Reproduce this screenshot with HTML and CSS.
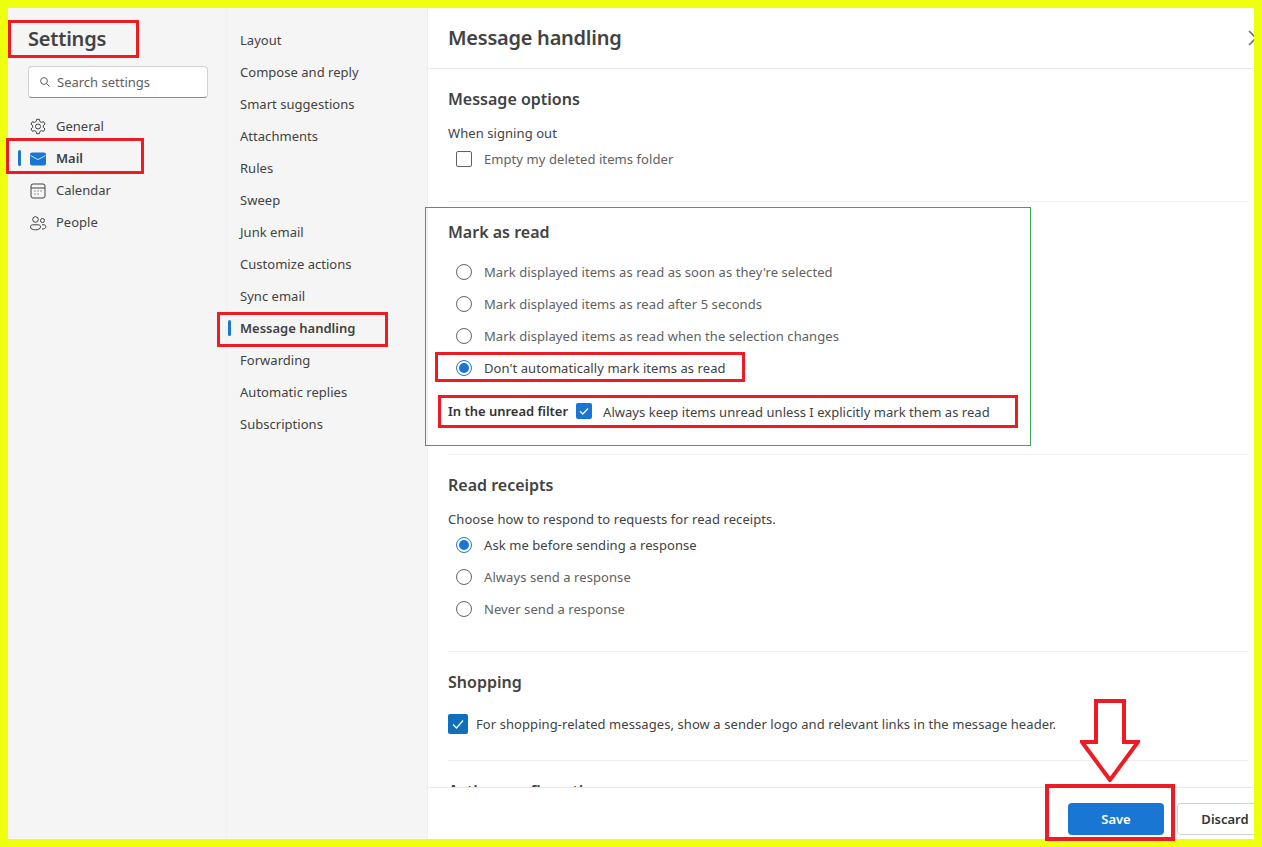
FILE: index.html
```html
<!DOCTYPE html>
<html lang="en">
<head>
<meta charset="utf-8">
<title>Settings</title>
<link rel="stylesheet" href="styles.css">
</head>
<body>
<div class="app">
  <nav class="nav">
    <h1 class="nav-title">Settings</h1>
    <div class="search">
      <svg class="search-icon" viewBox="0 0 12 12"><circle cx="5" cy="5" r="3.4"/><path d="M7.5 7.5 10.5 10.5"/></svg>
      <span>Search settings</span>
    </div>
    <ul class="nav-list">
      <li class="nav-item">
        <svg class="nav-icon" viewBox="0 0 20 20"><path d="M8.6 2.3h2.8l.5 2.2 1.5.9 2.2-.7 1.400 2.400-1.700 1.500v1.800l1.700 1.500-1.400 2.400-2.200-.7-1.500.9-.5 2.200H8.600l-.5-2.200-1.500-.9-2.200.7L3 11.900l1.700-1.500V8.600L3 7.100l1.400-2.400 2.200.7 1.500-.9z"/><circle cx="10" cy="9.500" r="2.500"/></svg>
        General
      </li>
      <li class="nav-item is-active">
        <svg class="nav-icon" viewBox="0 0 20 20"><rect class="mail-body" x="2" y="3.500" width="16" height="13" rx="2"/><path class="mail-flap" d="M2.500 6.500 10 10.600l7.500-4.100"/></svg>
        Mail
      </li>
      <li class="nav-item">
        <svg class="nav-icon" viewBox="0 0 20 20"><rect x="3" y="3" width="14" height="14" rx="2"/><path d="M3 7h14M6.500 10h1M9.500 10h1M12.500 10h1M6.500 13h1M9.500 13h1"/></svg>
        Calendar
      </li>
      <li class="nav-item">
        <svg class="nav-icon" viewBox="0 0 20 20"><circle cx="7.500" cy="6.500" r="2.800"/><circle cx="14.500" cy="7.500" r="2"/><path d="M2.500 14c0-1.500 1-2.200 2-2.200h6c1 0 2 .7 2 2.200 0 2-2.500 2.800-5 2.800s-5-.8-5-2.800zM14 11.800h2c1 0 1.800.7 1.800 1.900 0 1.600-1.700 2.300-3.800 2.300"/></svg>
        People
      </li>
    </ul>
  </nav>

  <aside class="sub">
    <ul class="sub-list">
      <li class="sub-item">Layout</li>
      <li class="sub-item">Compose and reply</li>
      <li class="sub-item">Smart suggestions</li>
      <li class="sub-item">Attachments</li>
      <li class="sub-item">Rules</li>
      <li class="sub-item">Sweep</li>
      <li class="sub-item">Junk email</li>
      <li class="sub-item">Customize actions</li>
      <li class="sub-item">Sync email</li>
      <li class="sub-item is-active">Message handling</li>
      <li class="sub-item">Forwarding</li>
      <li class="sub-item">Automatic replies</li>
      <li class="sub-item">Subscriptions</li>
    </ul>
  </aside>

  <main class="main">
    <header class="main-head">
      <h2 class="main-title">Message handling</h2>
      <svg class="close" viewBox="0 0 16 16"><path d="M1 1 15 15M15 1 1 15"/></svg>
    </header>
    <div class="scroll">
      <section class="sec sec-options">
        <h3 class="sec-title">Message options</h3>
        <p class="label label-first">When signing out</p>
        <div class="row row-indent"><span class="check"></span><span class="muted">Empty my deleted items folder</span></div>
      </section>
      <section class="sec sec-read">
        <h3 class="sec-title">Mark as read</h3>
        <div class="group">
          <div class="row row-indent"><span class="radio"></span><span class="muted">Mark displayed items as read as soon as they're selected</span></div>
          <div class="row row-indent"><span class="radio"></span><span class="muted">Mark displayed items as read after 5 seconds</span></div>
          <div class="row row-indent"><span class="radio"></span><span class="muted">Mark displayed items as read when the selection changes</span></div>
          <div class="row row-indent"><span class="radio is-on"></span><span class="strong-text">Don't automatically mark items as read</span></div>
        </div>
        <div class="filter">
          <strong class="filter-label">In the unread filter</strong>
          <span class="check is-on small"><svg viewBox="0 0 16 16"><path d="M4 8.300 6.800 11 12 5.500"/></svg></span>
          <span class="strong-text filter-text">Always keep items unread unless I explicitly mark them as read</span>
        </div>
      </section>
      <section class="sec sec-receipts">
        <h3 class="sec-title">Read receipts</h3>
        <p class="label label-first">Choose how to respond to requests for read receipts.</p>
        <div class="row row-indent"><span class="radio is-on"></span><span class="strong-text">Ask me before sending a response</span></div>
        <div class="row row-indent"><span class="radio"></span><span class="muted">Always send a response</span></div>
        <div class="row row-indent"><span class="radio"></span><span class="muted">Never send a response</span></div>
      </section>
      <section class="sec sec-shopping">
        <h3 class="sec-title">Shopping</h3>
        <div class="row row-shop"><span class="check is-on large"><svg viewBox="0 0 20 20"><path d="M5 10.500 8.500 14 15 6.500"/></svg></span><span class="strong-text">For shopping-related messages, show a sender logo and relevant links in the message header.</span></div>
      </section>
      <section class="sec sec-last">
        <h3 class="sec-title">Action confirmation</h3>
      </section>
    </div>
    <footer class="foot">
      <button class="btn btn-save">Save</button>
      <button class="btn btn-discard">Discard</button>
    </footer>
  </main>
</div>

<div class="mark green-box"></div>
<div class="mark box-settings"></div>
<div class="mark box-mail"></div>
<div class="mark box-handling"></div>
<div class="mark box-radio"></div>
<div class="mark box-filter"></div>
<div class="mark box-save"></div>
<svg class="arrow" viewBox="0 0 60 84"><path d="M16 3H44V44H58L30 82 2 44H16Z"/></svg>
</body>
</html>
```
FILE: styles.css
```css
* { box-sizing: border-box; }
html, body { height: 100%; }
body {
  margin: 0;
  background: #efff10;
  padding: 8px;
  overflow: hidden;
  font-family: "Noto Sans", "Open Sans", sans-serif;
  font-size: 13px;
  color: #424242;
}
h1, h2, h3, p, ul { margin: 0; padding: 0; }
ul { list-style: none; }

.app { display: flex; height: 831px; width: 1246px; overflow: hidden; }

.nav { width: 219px; flex: none; background: #f5f5f5; border-right: 1px solid #f0f0f0; padding-left: 20px; }
.nav-title { font-size: 20px; font-weight: 600; line-height: 28px; margin-top: 17px; color: #424242; letter-spacing: -0.2px; }
.search {
  display: flex; align-items: center; gap: 6px;
  width: 180px; height: 32px; margin-top: 13px; padding-left: 10px;
  background: #fff; border: 1px solid #d1d1d1; border-bottom-color: #8a8a8a; border-radius: 4px;
  color: #616161;
}
.search-icon { width: 12px; height: 12px; fill: none; stroke: #616161; stroke-width: 1; }
.nav-list { margin-top: 12px; }
.nav-item { position: relative; display: flex; align-items: center; gap: 8px; height: 32px; }
.nav-item.is-active { font-weight: 600; }
.nav-item.is-active::before {
  content: ""; position: absolute; left: -10px; top: 8px; width: 3px; height: 16px;
  background: #1976d2; border-radius: 2px;
}
.nav-icon { width: 20px; height: 20px; fill: none; stroke: #424242; stroke-width: 1; flex: none; margin-top: 2px; }
.mail-body { fill: #1976d2; stroke: none; }
.mail-flap { stroke: #cfe3f7; stroke-width: 1; }

.sub { width: 201px; flex: none; background: #f5f5f5; padding-top: 16px; border-right: 1px solid #efefef; }
.sub-item { position: relative; height: 32px; line-height: 32px; padding-left: 13px; letter-spacing: 0.03px; }
.sub-item.is-active { font-weight: 600; letter-spacing: 0; }
.sub-item.is-active::before {
  content: ""; position: absolute; left: 1px; top: 8px; width: 3px; height: 16px;
  background: #1976d2; border-radius: 2px;
}

.main { position: relative; flex: none; width: 826px; background: #fff; display: flex; flex-direction: column; overflow: hidden; }
.main-head {
  flex: none; height: 61px; padding-left: 20px;
  display: flex; align-items: center;
  border-bottom: 1px solid #e9e9e9;
  position: relative;
}
.main-title { font-size: 20px; font-weight: 600; line-height: 28px; letter-spacing: -0.25px; }
.close { width: 16px; height: 16px; fill: none; stroke: #6b7280; stroke-width: 1.600; position: absolute; left: 820px; top: 22px; }

.scroll { flex: 1; min-height: 0; overflow: hidden; padding-left: 20px; }
.sec { width: 800px; border-bottom: 1px solid #eeeeee; }
.sec-title { font-size: 16px; font-weight: 600; line-height: 22px; }
.sec-options { height: 133px; padding-top: 19px; }
.sec-read { height: 253px; padding-top: 19px; }
.sec-receipts { height: 197px; padding-top: 19px; }
.sec-shopping { height: 109px; padding-top: 19px; }
.sec-last { border-bottom: 0; padding-top: 19px; }
.label { line-height: 20px; color: #424242; letter-spacing: 0.07px; }
.label-first { margin-top: 13px; }
.row { display: flex; align-items: center; height: 32px; }
.row-indent { padding-left: 8px; gap: 12px; }
.group { margin-top: 13px; }
.row-shop { margin-top: 15px; gap: 8px; }
.muted { color: #616161; letter-spacing: 0.075px; }
.strong-text { color: #424242; letter-spacing: 0.075px; }

.check {
  flex: none; display: inline-flex; width: 16px; height: 16px;
  border: 1px solid #616161; border-radius: 2px; background: #fff;
}
.check svg { width: 100%; height: 100%; fill: none; stroke: #fff; stroke-width: 1.300; }
.check.is-on { background: #1976d2; border: 0; }
.check.large { width: 20px; height: 20px; background: #106ebe; }
.radio {
  flex: none; width: 16px; height: 16px; border-radius: 50%;
  border: 1px solid #616161; background: #fff; position: relative;
}
.radio.is-on { border-color: #1976d2; }
.radio.is-on::after {
  content: ""; position: absolute; inset: 2px; border-radius: 50%; background: #1976d2;
}
.filter { display: flex; align-items: center; height: 20px; margin-top: 17px; }
.filter-label { font-weight: 600; margin-right: 8px; color: #333; letter-spacing: -0.02px; }
.filter .check { margin-right: 11px; }
.filter-text { padding-top: 2px; letter-spacing: 0.03px; }

.foot {
  flex: none; height: 52px; display: flex; align-items: flex-start; gap: 13px;
  padding: 15px 0 0 640px; border-top: 1px solid #e9e9e9; background: #fff; width: 900px;
}
.btn { flex: none; font: inherit; font-weight: 600; height: 32px; border-radius: 4px; }
.btn-save { width: 96px; background: #1976d2; color: #fff; border: 0; }
.btn-discard { width: 96px; background: #fff; color: #333; border: 1px solid #d1d1d1; }

.mark { position: absolute; border: 3px solid #ed1c24; }
.green-box { left: 425px; top: 207px; width: 606px; height: 239px; border: 1px solid #3aa655; }
.box-settings { left: 8px; top: 20px; width: 131px; height: 38px; }
.box-mail { left: 6px; top: 138px; width: 138px; height: 36px; }
.box-handling { left: 217px; top: 312px; width: 171px; height: 35px; }
.box-radio { left: 435px; top: 352px; width: 310px; height: 30px; }
.box-filter { left: 438px; top: 395px; width: 580px; height: 33px; }
.box-save { left: 1045px; top: 784px; width: 130px; height: 57px; border-width: 4px; }
.arrow { position: absolute; left: 1080px; top: 698px; width: 60px; height: 84px; fill: #fff; stroke: #ed1c24; stroke-width: 4; }
```
